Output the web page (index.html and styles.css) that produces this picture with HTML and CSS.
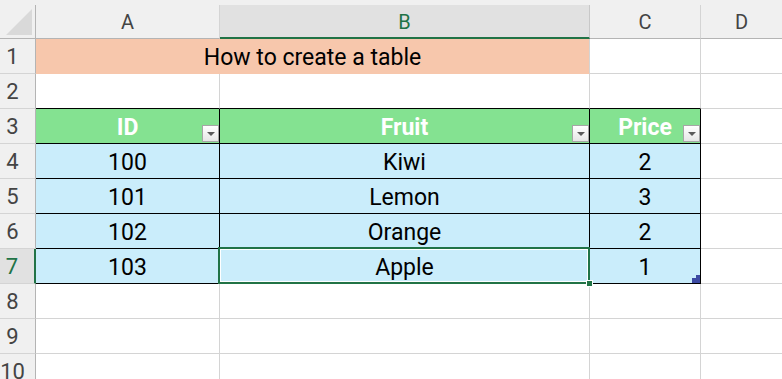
FILE: index.html
```html
<!DOCTYPE html>
<html lang="en">
<head>
  <meta charset="UTF-8">
  <title>How to create a table</title>
  <link rel="stylesheet" href="styles.css">
</head>
<body>
  <div class="topbar"></div>
  <div class="sheet">
    <div class="corner">
      <svg width="26" height="26" viewBox="0 0 26 26"><path d="M26 0 V26 H0 Z" fill="#d9d9d9"/></svg>
    </div>
    <div class="col-head">A</div>
    <div class="col-head active">B</div>
    <div class="col-head">C</div>
    <div class="col-head last">D</div>

    <div class="row-head">1</div>
    <div class="cell title">How to create a table</div>
    <div class="cell"></div>
    <div class="cell last"></div>

    <div class="row-head">2</div>
    <div class="cell edge"></div>
    <div class="cell edge"></div>
    <div class="cell edge"></div>
    <div class="cell last"></div>

    <div class="row-head">3</div>
    <div class="cell th">ID<span class="filter"></span></div>
    <div class="cell th">Fruit<span class="filter"></span></div>
    <div class="cell th">Price<span class="filter"></span></div>
    <div class="cell last"></div>

    <div class="row-head">4</div>
    <div class="cell td">100</div>
    <div class="cell td">Kiwi</div>
    <div class="cell td">2</div>
    <div class="cell last"></div>

    <div class="row-head">5</div>
    <div class="cell td">101</div>
    <div class="cell td">Lemon</div>
    <div class="cell td">3</div>
    <div class="cell last"></div>

    <div class="row-head">6</div>
    <div class="cell td">102</div>
    <div class="cell td">Orange</div>
    <div class="cell td">2</div>
    <div class="cell last"></div>

    <div class="row-head active">7</div>
    <div class="cell td">103</div>
    <div class="cell td selected">Apple<span class="selection"><span class="fill-handle"></span></span></div>
    <div class="cell td">1<svg class="resize" width="8" height="8" viewBox="0 0 8 8"><path d="M4 0 H8 V8 H0 V3 H4 Z" fill="#3c4aa3"/></svg></div>
    <div class="cell last"></div>

    <div class="row-head">8</div>
    <div class="cell"></div>
    <div class="cell"></div>
    <div class="cell"></div>
    <div class="cell last"></div>

    <div class="row-head">9</div>
    <div class="cell"></div>
    <div class="cell"></div>
    <div class="cell"></div>
    <div class="cell last"></div>

    <div class="row-head">10</div>
    <div class="cell"></div>
    <div class="cell"></div>
    <div class="cell"></div>
    <div class="cell last"></div>
  </div>
</body>
</html>
```

FILE: styles.css
```css
body {
  margin: 0;
  background-color: #ffffff;
  font-family: 'Roboto', 'Liberation Sans', sans-serif;
  overflow: hidden;
}
.topbar {
  height: 5px;
  background-color: #f0f0f0;
}
.sheet {
  display: grid;
  grid-template-columns: 36px 184px 370px 111px 1fr;
  grid-template-rows: 34px;
  grid-auto-rows: 35px;
}
.sheet > div {
  box-sizing: border-box;
}
.corner {
  display: flex;
  align-items: flex-end;
  justify-content: flex-end;
  padding: 0 3px 3px 0;
  background-color: #f0f0f0;
  border-right: 1px solid #b4b4b4;
  border-bottom: 1px solid #b4b4b4;
}
.corner svg {
  display: block;
}
.col-head {
  display: flex;
  align-items: center;
  justify-content: center;
  background-color: #f0f0f0;
  border-right: 1px solid #d4d4d4;
  border-bottom: 1px solid #b4b4b4;
  color: #444444;
  font-size: 20px;
  padding-top: 1px;
}
.col-head.active {
  background-color: #e1e1e1;
  color: #217346;
  border-bottom: 2px solid #217346;
  border-right-color: #c8c8c8;
}
.col-head.last {
  border-right: none;
}
.row-head {
  display: flex;
  align-items: center;
  justify-content: center;
  padding-right: 10px;
  background-color: #f0f0f0;
  border-right: 1px solid #b4b4b4;
  border-bottom: 1px solid #d4d4d4;
  color: #444444;
  font-size: 22px;
  padding-top: 1px;
}
.row-head.active {
  background-color: #e1e1e1;
  color: #217346;
  border-right: 2px solid #217346;
}
.cell {
  position: relative;
  display: flex;
  align-items: center;
  justify-content: center;
  background-color: #ffffff;
  border-right: 1px solid #d4d4d4;
  border-bottom: 1px solid #d4d4d4;
  color: #000000;
  font-size: 23px;
  padding-top: 2px;
}
.cell.last {
  border-right: none;
}
.cell.title {
  grid-column: span 2;
  background-color: #f7c7ac;
  border-bottom-color: #f7c7ac;
}
.cell.edge {
  border-bottom-color: #000000;
}
.cell.th {
  background-color: #84e291;
  border-right-color: #000000;
  border-bottom-color: #000000;
  color: #ffffff;
  font-weight: bold;
}
.cell.td {
  background-color: #caedfb;
  border-right-color: #000000;
  border-bottom-color: #000000;
}
.cell.selected {
  z-index: 1;
}
.filter {
  position: absolute;
  right: 0;
  bottom: 1px;
  width: 17px;
  height: 17px;
  box-sizing: border-box;
  border: 1px solid #a6a6a6;
  background: linear-gradient(#ffffff, #e6e6e6);
}
.filter::after {
  content: '';
  position: absolute;
  left: 4px;
  top: 6px;
  border-left: 4px solid transparent;
  border-right: 4px solid transparent;
  border-top: 4px solid #5a5a5a;
}
.selection {
  position: absolute;
  left: -2px;
  top: -2px;
  right: -1px;
  bottom: -1px;
  border: 2px solid #217346;
  box-shadow: inset 0 0 0 1px #ffffff;
}
.fill-handle {
  position: absolute;
  right: -5px;
  bottom: -5px;
  width: 5px;
  height: 5px;
  background-color: #217346;
  border: 1px solid #ffffff;
}
.resize {
  position: absolute;
  right: 0;
  bottom: 0;
}
```
